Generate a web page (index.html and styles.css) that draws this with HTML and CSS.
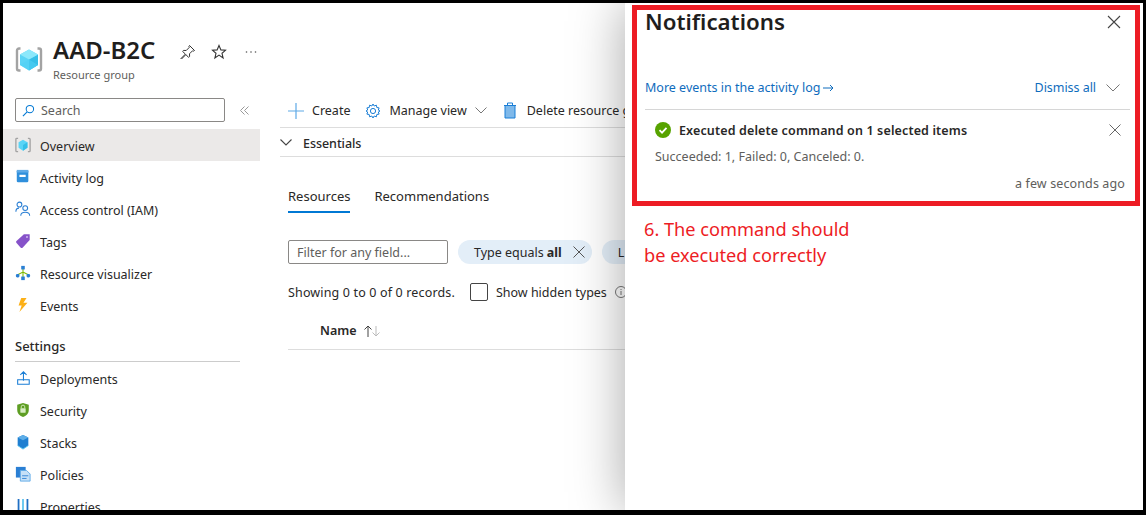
FILE: index.html
```html
<!DOCTYPE html>
<html lang="en">
<head>
<meta charset="utf-8">
<title>AAD-B2C</title>
<link rel="stylesheet" href="styles.css">
</head>
<body>
<div class="frame">
  <aside class="sidebar">
    <header class="rg-head">
      <svg class="rg-icon" viewBox="0 0 28 28"><path d="M5.500 2.500H4a2 2 0 0 0-2 2v18a2 2 0 0 0 2 2h1.500" fill="none" stroke="#a3a3a3" stroke-width="2.400"/><path d="M22.500 2.500H24a2 2 0 0 1 2 2v18a2 2 0 0 1-2 2h-1.500" fill="none" stroke="#a3a3a3" stroke-width="2.400"/><path d="M14 3.500l9 5v10.500l-9 5.500-9-5.500V8.500z" fill="#5ad4f6"/><path d="M14 13.500l9-5v10.500l-9 5.500z" fill="#36bfe8"/><path d="M14 13.500L5 8.500l9-5 9 5z" fill="#8ce8fb"/><path d="M5 19l9-5.500 9 5.500-9 5.500z" fill="#50d0f5" opacity=".6"/></svg>
      <div class="rg-title">
        <h1>AAD-B2C</h1>
        <p>Resource group</p>
      </div>
      <svg class="head-act pin" viewBox="0 0 16 16"><path d="M9.500 1.500l5 5-1 .6-1-.3-3 3 .1 2.600-1 1-2.700-2.800L1.500 15l-.5-.5 4.400-4.400-2.800-2.700 1-1 2.600.1 3-3-.3-1z" fill="none" stroke="#333" stroke-width="1"/></svg>
      <svg class="head-act star" viewBox="0 0 16 16"><path d="M8 1.500l1.900 4.400 4.600.4-3.500 3 1.100 4.700L8 11.100l-4.100 2.900L5 9.300l-3.500-3 4.600-.4z" fill="none" stroke="#333" stroke-width="1.100"/></svg>
      <svg class="head-more" viewBox="0 0 12 4"><circle cx="1.500" cy="2" r=".8" fill="#555"/><circle cx="6" cy="2" r=".8" fill="#555"/><circle cx="10.500" cy="2" r=".8" fill="#555"/></svg>
    </header>
    <div class="search-row">
      <label class="search">
        <svg class="search-ic" viewBox="0 0 14 14"><circle cx="8.500" cy="5.500" r="4" fill="none" stroke="#0078d4" stroke-width="1.100"/><path d="M5.500 8.500L1 13" stroke="#0078d4" stroke-width="1.200"/></svg>
        <span>Search</span>
      </label>
      <svg class="collapse" viewBox="0 0 9 9"><path d="M4.500.500L.5 4.500l4 4M8.500.500l-4 4 4 4" fill="none" stroke="#999"/></svg>
    </div>
    <nav class="nav">
      <a class="nav-item active"><svg class="ni" viewBox="0 0 18 18"><path d="M3.500 1.500H2a1 1 0 0 0-1 1v13a1 1 0 0 0 1 1h1.500M14.500 1.500H16a1 1 0 0 1 1 1v13a1 1 0 0 1-1 1h-1.500" fill="none" stroke="#a3a3a3" stroke-width="1.500"/><path d="M9 3l5 3v6l-5 3.500L4 12V6z" fill="#5ad4f6"/><path d="M9 9l5-3v6l-5 3.500z" fill="#36bfe8"/></svg><span>Overview</span></a>
      <a class="nav-item"><svg class="ni" viewBox="0 0 18 18"><rect x="2" y="1" width="13" height="14" rx="1.500" fill="#2f8fdc"/><rect x="2" y="1" width="13" height="3" fill="#5ea9e6"/><rect x="5" y="6.500" width="7" height="2.500" fill="#fff"/></svg><span>Activity log</span></a>
      <a class="nav-item"><svg class="ni" viewBox="0 0 18 18"><circle cx="5" cy="4" r="2.700" fill="none" stroke="#2a7fd4" stroke-width="1.200"/><circle cx="11.500" cy="8" r="2.700" fill="none" stroke="#2a7fd4" stroke-width="1.200"/><path d="M1 12c0-2.500 1.500-4 3.500-4M6.500 16.500c0-5 10-5 10 0" fill="none" stroke="#2a7fd4" stroke-width="1.200"/></svg><span>Access control (IAM)</span></a>
      <a class="nav-item"><svg class="ni" viewBox="0 0 18 18"><path d="M10 1.500h6.500V8l-8 8.500a1.500 1.500 0 0 1-2 0L1.500 11a1.500 1.500 0 0 1 .2-2z" fill="#8652c9"/><circle cx="13.500" cy="4.500" r="1" fill="#d8c6f2"/></svg><span>Tags</span></a>
      <a class="nav-item"><svg class="ni" viewBox="0 0 18 18"><path d="M9 4v11M3 11l6-3 6 3" fill="none" stroke="#7fba00" stroke-width="1.200"/><rect x="7" y="1" width="4" height="4" fill="#2a7fd4"/><rect x="1" y="10" width="4" height="4" rx="1.500" fill="#2a7fd4"/><rect x="13" y="10" width="4" height="4" rx="1.500" fill="#2a7fd4"/><rect x="7" y="13" width="4" height="4" fill="#2a7fd4"/></svg><span>Resource visualizer</span></a>
      <a class="nav-item"><svg class="ni" viewBox="0 0 18 18"><path d="M7 1h6L9.500 6.500H14L5 17l2.500-7.500H4z" fill="#fcb017"/></svg><span>Events</span></a>
      <h2 class="nav-heading">Settings</h2>
      <a class="nav-item"><svg class="ni" viewBox="0 0 18 18"><path d="M3 11h13v5H3zM9.500 12V2M6 5.500L9.500 2 13 5.500" fill="none" stroke="#1a7ed6" stroke-width="1.200"/></svg><span>Deployments</span></a>
      <a class="nav-item"><svg class="ni" viewBox="0 0 18 18"><path d="M9 1l6.500 2v6c0 4-3 6.500-6.500 8-3.500-1.500-6.500-4-6.500-8V3z" fill="#5e9e23"/><rect x="6" y="7" width="6" height="5" rx=".5" fill="#d9eec4"/><path d="M7 7V5.500a2 2 0 0 1 4 0V7" fill="none" stroke="#d9eec4"/></svg><span>Security</span></a>
      <a class="nav-item"><svg class="ni" viewBox="0 0 18 18"><path d="M9 1l6 3v9l-6 4-6-4V4z" fill="#1f7fd1"/><path d="M9 1l6 3-6 3-6-3z" fill="#5eaee8"/><path d="M3 13l6 4 6-4" fill="none" stroke="#52c3ef"/></svg><span>Stacks</span></a>
      <a class="nav-item"><svg class="ni" viewBox="0 0 18 18"><rect x="1" y="1" width="11" height="12" fill="#2a7fd4"/><path d="M6 5h7l4 4v8H6z" fill="#c5e0f7" stroke="#5ea9e6"/><path d="M8 11h7M8 14h5" stroke="#2a7fd4"/></svg><span>Policies</span></a>
      <a class="nav-item"><svg class="ni" viewBox="0 0 18 18"><path d="M3 1h2v16H3zM13 1h2v16h-2z" fill="#1f6fc4"/><path d="M8 1h2v16H8z" fill="#5ec4ef"/></svg><span>Properties</span></a>
    </nav>
  </aside>

  <main class="content">
    <div class="toolbar">
      <span class="tool"><svg class="tool-ic" viewBox="0 0 16 16"><path d="M8 0v16M0 8h16" stroke="#5ea9e6" stroke-width="1.200"/></svg>Create</span>
      <span class="tool"><svg class="tool-ic" viewBox="0 0 16 16"><circle cx="8" cy="8" r="2.600" fill="none" stroke="#1a7ed6"/><path d="M8 1l1.200 2 2.200-.8.400 2.300 2.300.4-.8 2.100 1.700 1-1.700 1 .8 2.100-2.300.4-.4 2.300-2.200-.8L8 15l-1.200-2-2.200.8-.4-2.300-2.300-.4.800-2.100L1 8l1.700-1-.8-2.100 2.300-.4.400-2.300 2.200.8z" fill="none" stroke="#1a7ed6"/></svg>Manage view<svg class="chev" viewBox="0 0 12 7"><path d="M.5.500L6 6l5.500-5.500" fill="none" stroke="#777"/></svg></span>
      <span class="tool tool-delete"><svg class="tool-ic trash" viewBox="0 0 14 17"><path d="M1 3.500h12M4.500 3V1h5v2" fill="none" stroke="#1a7ed6"/><path d="M2 3.500h10V16H2z" fill="#7fb9ea" stroke="#1a7ed6"/></svg>Delete resource g</span>
    </div>
    <div class="essentials">
      <svg class="ess-chev" viewBox="0 0 12 7"><path d="M.5.500L6 6l5.500-5.500" fill="none" stroke="#444" stroke-width="1.100"/></svg>
      <span class="ess-label">Essentials</span>
    </div>
    <div class="inner">
      <div class="tabs">
        <span class="tab selected">Resources</span>
        <span class="tab">Recommendations</span>
      </div>
      <div class="filters">
        <span class="filter">Filter for any field...</span>
        <span class="pill">Type equals <b>all</b><svg class="pill-x" viewBox="0 0 12 12"><path d="M.5.500l11 11M11.500.500l-11 11" stroke="#555"/></svg></span>
        <span class="pill pill-clipped">L</span>
      </div>
      <div class="records">
        <span class="count">Showing 0 to 0 of 0 records.</span>
        <span class="check"></span>
        <span class="hidden-types">Show hidden types</span>
        <svg class="info" viewBox="0 0 12 12"><circle cx="6" cy="6" r="5.500" fill="none" stroke="#777"/><path d="M6 5v4M6 3v1" stroke="#777"/></svg>
      </div>
      <div class="table-head">
        <span class="col-name">Name</span>
        <svg class="sort" viewBox="0 0 18 12"><path d="M5 12V1M1.500 4.500L5 1l3.500 3.500" fill="none" stroke="#444"/><path d="M13 1v10M9.500 7.500L13 11l3.500-3.500" fill="none" stroke="#bbb"/></svg>
      </div>
    </div>
  </main>

  <section class="panel">
    <div class="panel-top">
      <h2>Notifications</h2>
      <svg class="panel-x" viewBox="0 0 14 14"><path d="M1 1l12 12M13 1L1 13" stroke="#444" stroke-width="1.100"/></svg>
    </div>
    <div class="panel-links">
      <a class="link">More events in the activity log<svg class="arrow" viewBox="0 0 11 8"><path d="M0 4h10M7 1l3 3-3 3" fill="none" stroke="#0f6cbd"/></svg></a>
      <a class="link dismiss">Dismiss all</a>
      <svg class="dismiss-chev" viewBox="0 0 14 8"><path d="M.5.500L7 7l6.500-6.500" fill="none" stroke="#777"/></svg>
    </div>
    <article class="note">
      <div class="note-head">
        <svg class="ok" viewBox="0 0 16 16"><circle cx="8" cy="8" r="8" fill="#57a300"/><path d="M4.500 8.200l2.500 2.400 4.500-4.800" fill="none" stroke="#fff" stroke-width="1.800"/></svg>
        <strong>Executed delete command on 1 selected items</strong>
        <svg class="note-x" viewBox="0 0 12 12"><path d="M.5.500l11 11M11.500.500l-11 11" stroke="#666"/></svg>
      </div>
      <p class="note-body">Succeeded: 1, Failed: 0, Canceled: 0.</p>
      <p class="note-time">a few seconds ago</p>
    </article>
  </section>

  <div class="callout"></div>
  <p class="caption">6. The command should<br>be executed correctly</p>
</div>
</body>
</html>
```
FILE: styles.css
```css
* { box-sizing: border-box; }
html, body { margin: 0; height: 100%; background: #000; }
body { font-family: "Noto Sans", "Open Sans", sans-serif; font-size: 12.5px; color: #292827; overflow: hidden; }
.frame { position: relative; display: flex; width: 1146px; height: 515px; border: solid #000; border-width: 3px 3px 5px; background: #fff; overflow: hidden; }

.sidebar { flex: 0 0 257px; }
.rg-head { display: flex; align-items: flex-start; padding: 34px 0 0 12px; height: 95px; }
.rg-icon { width: 28px; height: 28px; margin: 9px 10px 0 0; flex: none; }
.rg-title { width: 127px; flex: none; }
.rg-title h1 { margin: 0; font-size: 24px; line-height: 26px; font-weight: 600; color: #1f1e1d; }
.rg-title p { margin: 4px 0 0; font-size: 11px; line-height: 16px; color: #605e5c; }
.head-act { width: 16px; height: 16px; margin-top: 7px; flex: none; }
.star { margin-left: 15px; }
.head-more { width: 12px; height: 4px; margin: 13px 0 0 18px; flex: none; }

.search-row { display: flex; align-items: center; padding-left: 12px; }
.search { display: flex; align-items: center; gap: 6px; width: 210px; height: 24px; padding-left: 6px; border: 1px solid #8a8886; border-radius: 2px; color: #605e5c; }
.search-ic { width: 13px; height: 13px; }
.collapse { width: 9px; height: 9px; margin-left: 15px; }

.nav { margin-top: 7px; }
.nav-item { display: flex; align-items: center; height: 32px; padding-left: 12px; color: #292827; }
.nav-item span { padding-top: 2px; }
.nav-item.active { background: #ebe9e8; }
.ni { width: 16px; height: 16px; margin-right: 9px; flex: none; }
.nav-heading { height: 41px; margin: 0 20px 0 12px; padding-top: 15px; border-bottom: 1px solid #ccc; font-size: 13px; line-height: 20px; font-weight: 500; color: #292827; }

.content { flex: 1; margin-left: 20px; min-width: 0; }
.toolbar { display: flex; align-items: center; gap: 15px; height: 34px; margin-top: 91px; padding: 0 0 0 8px; border-bottom: 1px solid #ddd; white-space: nowrap; }
.tool { display: flex; align-items: center; }
.tool-ic { width: 16px; height: 16px; margin-right: 8px; }
.tool-delete { margin-left: 1px; }
.trash { width: 14px; height: 17px; margin-right: 10px; }
.chev { width: 12px; height: 7px; margin-left: 8px; }
.essentials { display: flex; align-items: center; height: 29px; border-bottom: 1px solid #ddd; font-weight: 500; }
.ess-chev { width: 12px; height: 7px; margin-right: 11px; }
.ess-label { padding-top: 2px; letter-spacing: -.05px; }

.inner { padding-left: 8px; }
.tabs { display: flex; gap: 24px; margin-top: 27px; }
.tab { height: 29px; padding-top: 2px; line-height: 20px; font-size: 13px; }
.tab.selected { border-bottom: 2px solid #0078d4; }
.filters { display: flex; gap: 10px; margin-top: 27px; white-space: nowrap; }
.filter { display: flex; align-items: center; width: 160px; height: 24px; padding-left: 8px; border: 1px solid #8a8886; border-radius: 2px; color: #605e5c; }
.pill { display: flex; align-items: center; height: 24px; padding: 0 7px 0 16px; border-radius: 12px; background: #e3eef8; }
.pill-clipped { min-width: 100px; }
.pill b { margin-left: 3px; font-weight: 700; }
.pill-x { width: 12px; height: 12px; margin-left: 11px; }
.records { display: flex; align-items: center; height: 20px; margin-top: 18px; white-space: nowrap; }
.count { letter-spacing: .15px; }
.check { width: 18px; height: 18px; margin: 0 8px 0 15px; border: 1px solid #444; border-radius: 2px; }
.info { width: 12px; height: 12px; margin-left: 8px; }
.table-head { display: flex; align-items: center; height: 39px; margin-top: 9px; padding: 1px 0 0 32px; border-bottom: 1px solid #ddd; }
.col-name { font-weight: 600; }
.sort { width: 18px; height: 12px; margin-left: 6px; }

.panel { position: absolute; top: 0; bottom: 0; left: 622px; right: 0; padding: 0 13px 0 20px; background: #fff; box-shadow: 0 0 50px rgba(0,0,0,.35); }
.panel-top { display: flex; justify-content: space-between; align-items: center; height: 38px; }
.panel-top h2 { margin: 0; font-size: 22.300px; line-height: 30px; font-weight: 600; color: #1f1e1d; }
.panel-x { width: 14px; height: 14px; margin-right: 9px; }
.panel-links { display: flex; align-items: center; height: 69px; padding-top: 25px; border-bottom: 1px solid #d6d6d6; }
.link { color: #0f6cbd; }
.arrow { width: 11px; height: 8px; margin-left: 3px; }
.dismiss { margin-left: auto; letter-spacing: -.05px; }
.dismiss-chev { width: 14px; height: 8px; margin: 0 10px 0 10px; }
.note { padding: 9px 5px 0 10px; }
.note-head { display: flex; align-items: center; height: 22px; }
.ok { width: 16px; height: 16px; margin-right: 8px; }
.note-head strong { flex: 1; font-weight: 600; letter-spacing: .14px; }
.note-x { width: 12px; height: 12px; margin-right: 4px; }
.note-body { margin: 6px 0 0; line-height: 20px; color: #605e5c; }
.note-time { margin: 7px 0 0; line-height: 20px; text-align: right; letter-spacing: .12px; color: #605e5c; }

.callout { position: absolute; left: 629px; top: 2px; width: 508px; height: 201px; border: 5px solid #ed1c24; }
.caption { position: absolute; left: 641px; top: 213px; margin: 0; font-size: 18.200px; line-height: 26px; color: #ed1c24; }
```
